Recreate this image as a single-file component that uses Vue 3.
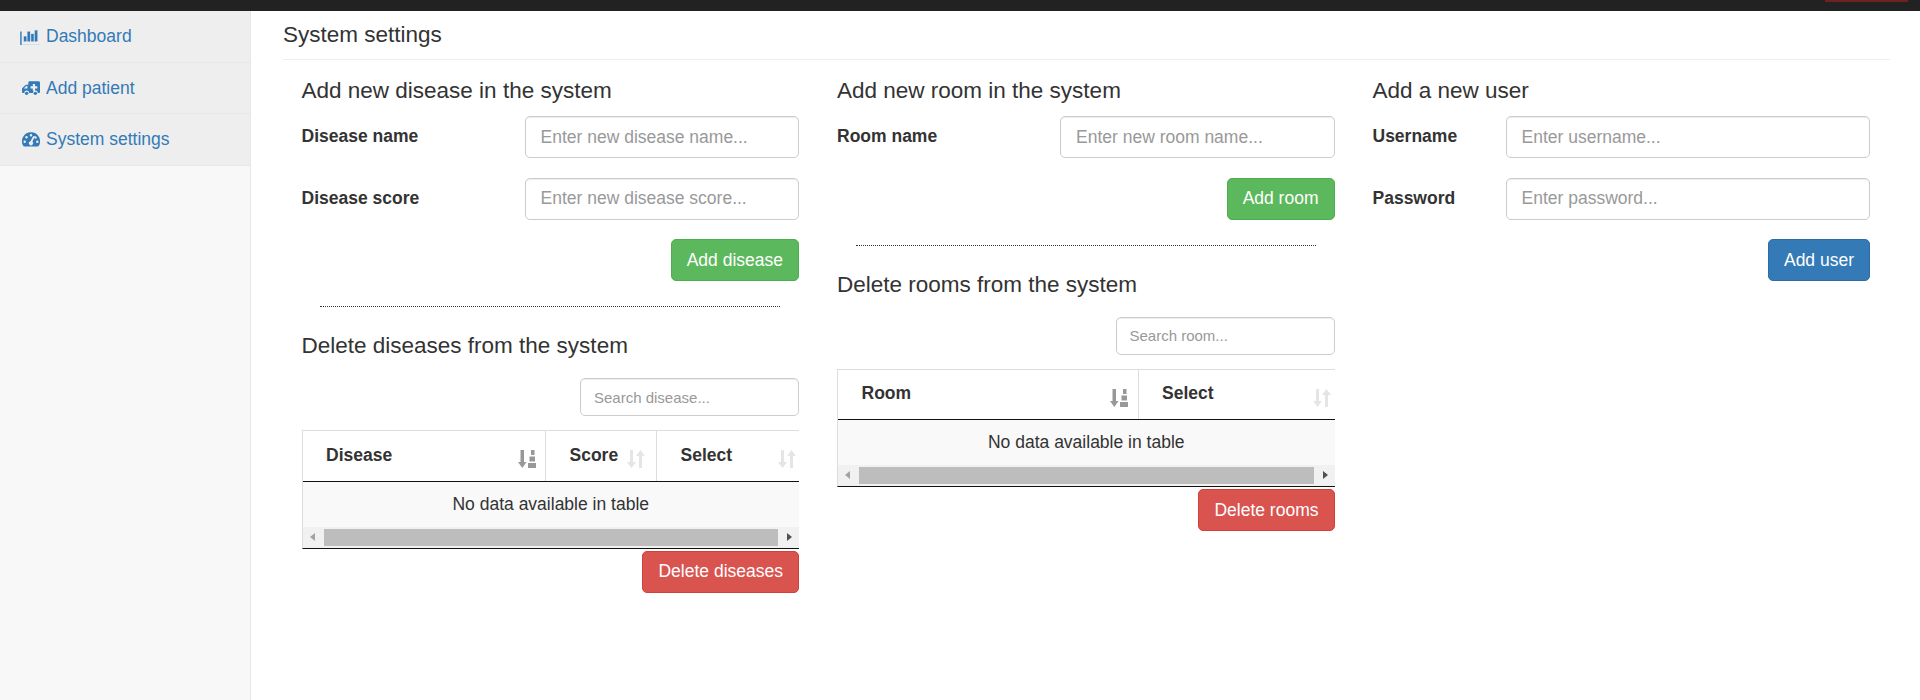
<template>
  <div class="page">
    <div class="navbar">
      <span class="logout-edge"></span>
    </div>
    <div class="layout">
      <aside class="sidebar">
        <a class="nav-item">
          <svg class="nav-icon nav-icon-chart" viewBox="0 0 2048 1792"><path d="M640 896v512H384V896h256zm384-512v1024H768V384h256zm1024 1408v128H0V384h128v1408h1920zM1408 640v768h-256V640h256zm384-384v1152h-256V256h256z" /></svg>
          Dashboard
        </a>
        <a class="nav-item">
          <svg class="nav-icon nav-icon-sm" viewBox="0 0 20 16">
            <path fill-rule="evenodd" d="M7 1.500A1.500 1.500 0 0 1 8.500 0h10A1.500 1.500 0 0 1 20 1.500V12a1 1 0 0 1-1 1h-1.500a2.700 2.700 0 0 0-5.400 0H7.900a2.700 2.700 0 0 0-5.400 0H1a1 1 0 0 1-1-1V8.500q0-.6.400-1L3.600 4.300q.4-.4 1-.4H7zM2 8h4V5.200H4.700zM12 3v2.500H9.500v2.500H12v2.500h2.500V8H17V5.500h-2.500V3z" />
            <circle cx="5.200" cy="13.400" r="1.900" />
            <circle cx="14.800" cy="13.400" r="1.900" />
          </svg>
          Add patient
        </a>
        <a class="nav-item">
          <svg class="nav-icon nav-icon-sm" viewBox="0 0 20 16">
            <path fill-rule="evenodd" d="M10 0a10 10 0 0 1 8.700 15q-.4.700-1.200.700h-15q-.8 0-1.200-.700A10 10 0 0 1 10 0zM10 2a1.400 1.400 0 1 0 0 2.800A1.400 1.400 0 0 0 10 2zM5 4a1.400 1.400 0 1 0 0 2.800A1.400 1.400 0 0 0 5 4zM15 4.500a1.400 1.400 0 1 0 0 2.800 1.400 1.400 0 0 0 0-2.800zM3 9a1.400 1.400 0 1 0 0 2.800A1.400 1.400 0 0 0 3 9zM17 9a1.400 1.400 0 1 0 0 2.800A1.400 1.400 0 0 0 17 9zM12.400 4.500l-3 5.400a2.300 2.300 0 1 0 2.200.600l2.400-5.500a.85.85 0 0 0-1.600-.5z" />
          </svg>
          System settings
        </a>
      </aside>

      <main class="content">
        <h3 class="page-title">System settings</h3>
        <div class="columns">
          <section class="column">
            <h4>Add new disease in the system</h4>
            <div class="form-row">
              <label>Disease name</label>
              <input class="field" placeholder="Enter new disease name..." />
            </div>
            <div class="form-row">
              <label>Disease score</label>
              <input class="field" placeholder="Enter new disease score..." />
            </div>
            <div class="actions">
              <button class="btn btn-green">Add disease</button>
            </div>
            <hr class="dots" />
            <h4 class="sub-title">Delete diseases from the system</h4>
            <div class="search-row">
              <input class="search" placeholder="Search disease..." />
            </div>
            <div class="table-box">
              <table>
                <thead>
                  <tr>
                    <th v-for="col in diseaseCols" :key="col.name" :class="col.cls">
                      {{ col.name }}
                      <svg class="sort" :class="{ 'sort-asc': col.active }" viewBox="0 0 18 18">
                        <template v-if="col.active">
                          <path d="M2.500 0h3.500v12h2.500l-4.250 6L0 12h2.500z" />
                          <path d="M13 0h3.500v5H13zM11.500 6.500H17v5h-5.500zM10 13h8v5h-8z" />
                        </template>
                        <path v-else d="M3 0h3v12h3l-4.500 6L0 12h3zM12 18h3V6h3l-4.500-6L9 6h3z" />
                      </svg>
                    </th>
                  </tr>
                </thead>
              </table>
              <div class="empty">No data available in table</div>
              <div class="scrollbar">
                <span class="arrow arrow-left"></span>
                <span class="thumb"></span>
                <span class="arrow arrow-right"></span>
              </div>
            </div>
            <div class="actions tight">
              <button class="btn btn-red">Delete diseases</button>
            </div>
          </section>

          <section class="column">
            <h4>Add new room in the system</h4>
            <div class="form-row">
              <label>Room name</label>
              <input class="field" placeholder="Enter new room name..." />
            </div>
            <div class="actions">
              <button class="btn btn-green">Add room</button>
            </div>
            <hr class="dots" />
            <h4 class="sub-title">Delete rooms from the system</h4>
            <div class="search-row">
              <input class="search" placeholder="Search room..." />
            </div>
            <div class="table-box">
              <table>
                <thead>
                  <tr>
                    <th v-for="col in roomCols" :key="col.name" :class="col.cls">
                      {{ col.name }}
                      <svg class="sort" :class="{ 'sort-asc': col.active }" viewBox="0 0 18 18">
                        <template v-if="col.active">
                          <path d="M2.500 0h3.500v12h2.500l-4.250 6L0 12h2.500z" />
                          <path d="M13 0h3.500v5H13zM11.500 6.500H17v5h-5.500zM10 13h8v5h-8z" />
                        </template>
                        <path v-else d="M3 0h3v12h3l-4.500 6L0 12h3zM12 18h3V6h3l-4.500-6L9 6h3z" />
                      </svg>
                    </th>
                  </tr>
                </thead>
              </table>
              <div class="empty">No data available in table</div>
              <div class="scrollbar">
                <span class="arrow arrow-left"></span>
                <span class="thumb"></span>
                <span class="arrow arrow-right"></span>
              </div>
            </div>
            <div class="actions tight">
              <button class="btn btn-red">Delete rooms</button>
            </div>
          </section>

          <section class="column user-column">
            <h4>Add a new user</h4>
            <div class="form-row">
              <label>Username</label>
              <input class="field" placeholder="Enter username..." />
            </div>
            <div class="form-row">
              <label>Password</label>
              <input class="field" placeholder="Enter password..." />
            </div>
            <div class="actions">
              <button class="btn btn-blue">Add user</button>
            </div>
          </section>
        </div>
      </main>
    </div>
  </div>
</template>

<script setup>
const diseaseCols = [
  { name: 'Disease', cls: 'col-disease', active: true },
  { name: 'Score', cls: 'col-score', active: false },
  { name: 'Select', cls: 'col-select', active: false },
];

const roomCols = [
  { name: 'Room', cls: 'col-room', active: true },
  { name: 'Select', cls: 'col-select-wide', active: false },
];
</script>

<style>
html,
body {
  margin: 0;
  background: #fff;
}
</style>

<style scoped>
.page {
  height: 700px;
  overflow: hidden;
  font-family: "Liberation Sans", Arial, sans-serif;
  font-size: 17.5px;
  line-height: 25px;
  color: #333;
}

.navbar {
  position: relative;
  height: 11px;
  background: #222;
}

.logout-edge {
  position: absolute;
  top: 0;
  left: 1825px;
  width: 83px;
  height: 2px;
  background: #6e2222;
}

.layout {
  display: flex;
  height: 689px;
}

.sidebar {
  width: 250px;
  flex: none;
  background: #f8f8f8;
  border-right: 1px solid #e7e7e7;
}

.nav-item {
  display: flex;
  align-items: center;
  gap: 6px;
  height: 51.500px;
  box-sizing: border-box;
  padding-left: 20px;
  background: #eee;
  border-bottom: 1px solid #e7e7e7;
  color: #337ab7;
}

.nav-item:nth-child(2) {
  padding-top: 1px;
}

.nav-icon {
  width: 20px;
  height: 17px;
  fill: #337ab7;
}

.nav-icon-chart {
  stroke: #337ab7;
  stroke-width: 30;
}

.nav-icon-sm {
  width: 18px;
  margin-left: 2px;
}

.content {
  flex: 1;
  padding: 0 32px;
}

.page-title {
  margin: 0;
  height: 49px;
  box-sizing: border-box;
  padding-top: 10px;
  border-bottom: 1px solid #eee;
  font-size: 22.500px;
  font-weight: 400;
  line-height: 28px;
}

.columns {
  display: grid;
  grid-template-columns: repeat(3, 535.500px);
}

.column {
  padding: 0 19.500px 0 18.500px;
  min-width: 0;
}

h4 {
  margin: 16px 0 11px;
  font-size: 22.500px;
  font-weight: 400;
  line-height: 29px;
}

.form-row {
  display: grid;
  grid-template-columns: 223px 1fr;
  margin-bottom: 19.500px;
}

.user-column .form-row {
  grid-template-columns: 133px 1fr;
}

label {
  font-weight: 700;
  line-height: 25px;
  padding-top: 8px;
}

.field,
.search {
  box-sizing: border-box;
  width: 100%;
  border: 1px solid #ccc;
  border-radius: 5px;
  background: #fff;
  box-shadow: inset 0 1px 1px rgba(0, 0, 0, 0.075);
  font-family: inherit;
  color: #555;
  outline: none;
}

.field {
  height: 42px;
  padding: 0 15px;
  font-size: 17.500px;
}

.search {
  width: 219px;
  height: 38px;
  padding: 0 13px;
  font-size: 15px;
}

.field::placeholder,
.search::placeholder {
  color: #999;
  opacity: 1;
}

.actions {
  display: flex;
  justify-content: flex-end;
}

.tight {
  margin-top: 2px;
}

.btn {
  height: 42px;
  padding: 0 15px;
  border: 1px solid transparent;
  border-radius: 5px;
  font-family: inherit;
  font-size: 17.500px;
  color: #fff;
}

.btn-green {
  background: #5cb85c;
  border-color: #4cae4c;
}

.btn-red {
  background: #d9534f;
  border-color: #d43f3a;
}

.btn-blue {
  background: #337ab7;
  border-color: #2e6da4;
}

.dots {
  width: 460px;
  margin: 25px auto 0;
  border: 0;
  border-top: 1px dotted #333;
}

.sub-title {
  margin: 24px 0 18px;
}

.search-row {
  display: flex;
  justify-content: flex-end;
  margin-bottom: 14px;
}

.table-box {
  overflow: hidden;
  border-top: 1px solid #ddd;
  border-bottom: 1px solid #111;
  border-left: 1px solid #ddd;
}

table {
  border-collapse: collapse;
  table-layout: fixed;
  width: 700px;
}

th {
  position: relative;
  box-sizing: border-box;
  height: 50px;
  padding: 0 0 1px 23.500px;
  border-right: 1px solid #ddd;
  border-bottom: 1px solid #111;
  text-align: left;
  font-weight: 700;
}

.col-disease {
  width: 243px;
}

.col-score {
  width: 111px;
}

.col-select {
  width: 346px;
}

.col-room {
  width: 300px;
}

.col-select-wide {
  width: 400px;
}

.sort {
  position: absolute;
  top: 19px;
  left: 0;
  width: 18px;
  height: 18px;
  fill: #333;
  opacity: 0.12;
}

.sort-asc {
  opacity: 0.5;
}

.col-disease .sort {
  left: 215px;
}

.col-score .sort {
  left: 81px;
}

.col-select .sort {
  left: 121px;
}

.col-room .sort {
  left: 272px;
}

.col-select-wide .sort {
  left: 174px;
}

.empty {
  height: 45px;
  background: #f9f9f9;
  text-align: center;
  line-height: 45px;
}

.scrollbar {
  display: flex;
  align-items: center;
  height: 21px;
  background: #f1f1f1;
}

.arrow {
  flex: none;
  width: 21px;
  height: 17px;
  position: relative;
}

.arrow::after {
  content: "";
  position: absolute;
  top: 4px;
  border-top: 4.500px solid transparent;
  border-bottom: 4.500px solid transparent;
}

.arrow-left::after {
  left: 7px;
  border-right: 5px solid #a3a3a3;
}

.arrow-right::after {
  left: 9px;
  border-left: 5px solid #505050;
}

.thumb {
  flex: 1;
  height: 17px;
  background: #bdbdbd;
}
</style>
